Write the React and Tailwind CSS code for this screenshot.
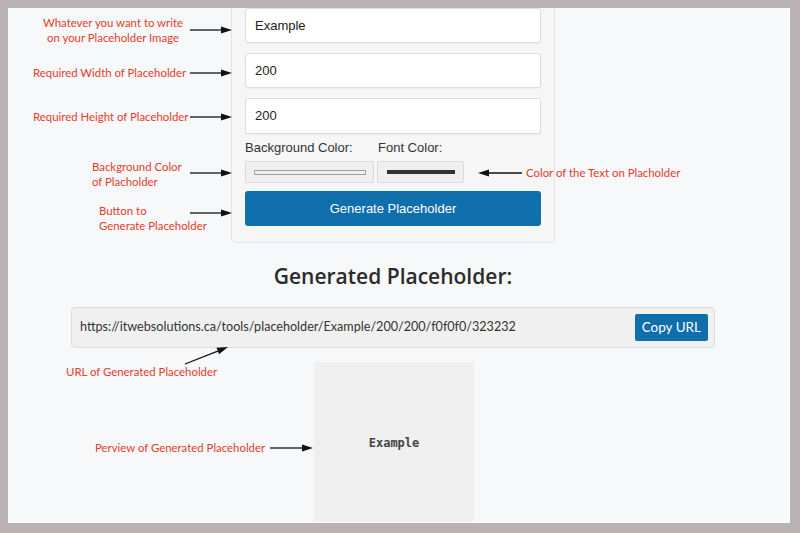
import React from 'react';

const url = 'https://itwebsolutions.ca/tools/placeholder/Example/200/200/f0f0f0/323232';

// notas vermelhas que ficam por cima da página
const notes = [
  { left: 40, top: 16, w: 146, center: true, lines: ['Whatever you want to write', 'on your Placeholder Image'] },
  { left: 33, top: 66, lines: ['Required Width of Placeholder'] },
  { left: 33, top: 110, lines: ['Required Height of Placeholder'] },
  { left: 92, top: 160, lines: ['Background Color', 'of Placholder'] },
  { left: 99, top: 204, lines: ['Button to', 'Generate Placeholder'] },
  { left: 526, top: 166, lines: ['Color of the Text on Placholder'] },
  { left: 66, top: 365, lines: ['URL of Generated Placeholder'] },
  { left: 95, top: 441, lines: ['Perview of Generated Placeholder'] },
];

const arrows = [
  [190, 30, 232, 30],
  [190, 73, 232, 73],
  [190, 117, 232, 117],
  [190, 173, 232, 173],
  [190, 213, 232, 213],
  [522, 173, 478, 173],
  [185, 364, 228, 347],
  [270, 448, 313, 448],
];

const Arrow = ({ a }) => {
  const [x1, y1, x2, y2] = a;
  const ang = Math.atan2(y2 - y1, x2 - x1);
  const len = 11, half = 3.5;
  const bx = x2 - Math.cos(ang) * len;
  const by = y2 - Math.sin(ang) * len;
  const px = -Math.sin(ang) * half;
  const py = Math.cos(ang) * half;
  return (
    <g>
      <line x1={x1} y1={y1} x2={bx} y2={by} stroke="#111" strokeWidth="1.3" />
      <polygon points={`${x2},${y2} ${bx + px},${by + py} ${bx - px},${by - py}`} fill="#111" />
    </g>
  );
};

export default function App() {
  const inputCls = "w-full h-[35px] px-[9px] bg-white border border-[#dcdcdc] rounded-[3px] text-[13px] text-[#222] flex items-center shadow-[0_1px_1px_rgba(0,0,0,0.04)]";

  return (
    <div className="relative w-[800px] h-[533px] bg-[#bab2b2] pt-[8px] pl-[8px] pr-[10px] pb-[10px] font-['Liberation_Sans',Arial,sans-serif]">
      <div className="relative w-full h-full bg-[#f7f8fa] border-r border-b border-white overflow-hidden">
        <div className="w-[644px] ml-[63px] flex flex-col">
          {/* formulário */}
          <div className="ml-[160px] w-[324px] -mt-[4px] pt-[4px] px-[13px] pb-[16px] bg-[#f6f6f7] border border-t-0 border-[#e3e3e3] rounded-b-[5px] flex flex-col">
            <div className={inputCls}>Example</div>
            <div className={inputCls + " mt-[10px]"}>200</div>
            <div className={inputCls + " mt-[10px] h-[36px]"}>200</div>
            <div className="flex mt-[6px] text-[13px] text-[#333] leading-[16px]">
              <span className="w-[133px]">Background Color:</span>
              <span>Font Color:</span>
            </div>
            <div className="flex gap-[3px] mt-[5px]">
              <div className="w-[129px] h-[22px] bg-[#efefef] border border-[#dadada] rounded-[2px] flex items-center justify-center">
                <div className="w-[112px] h-[5px] bg-[#f0f0f0] border border-[#a0a0a0]" />
              </div>
              <div className="w-[87px] h-[22px] bg-[#efefef] border border-[#dadada] rounded-[2px] flex items-center justify-center">
                <div className="w-[68px] h-[4px] bg-[#323232]" />
              </div>
            </div>
            <button className="mt-[8px] h-[35px] w-full bg-[#0f6eac] text-white text-[13px] rounded-[3px]">
              Generate Placeholder
            </button>
          </div>

          <h2 className="mt-[20px] text-center text-[21px] leading-[26px] font-semibold text-[#2b2b2b] font-['Open_Sans',sans-serif]">
            Generated Placeholder:
          </h2>

          <div className="mt-[18px] h-[41px] bg-[#f0f0f0] border border-[#dcdcdc] rounded-[4px] flex items-center justify-between pl-[8px] pr-[6px] font-['Lato',sans-serif]">
            <span className="text-[12.6px] text-[#333]">{url}</span>
            <button className="h-[27px] px-[7px] bg-[#0f6eac] text-white text-[13.5px] rounded-[2px]">Copy URL</button>
          </div>

          <div className="ml-[243px] mt-[14px] w-[160px] h-[160px] bg-[#efefef] flex items-center justify-center">
            <span className="font-['DejaVu_Sans_Mono',monospace] font-bold text-[12px] text-[#444] mt-[2px]">Example</span>
          </div>
        </div>
      </div>

      {notes.map((n, i) => (
        <div
          key={i}
          className={`absolute text-[11.4px] leading-[14.5px] text-[#e33b2d] font-['Lato',sans-serif] whitespace-nowrap ${n.center ? 'text-center' : ''}`}
          style={{ left: n.left, top: n.top, width: n.w }}
        >
          {n.lines.map((l, j) => <div key={j}>{l}</div>)}
        </div>
      ))}

      <svg className="absolute inset-0 pointer-events-none" width="800" height="533">
        {arrows.map((a, i) => <Arrow key={i} a={a} />)}
      </svg>
    </div>
  );
}
